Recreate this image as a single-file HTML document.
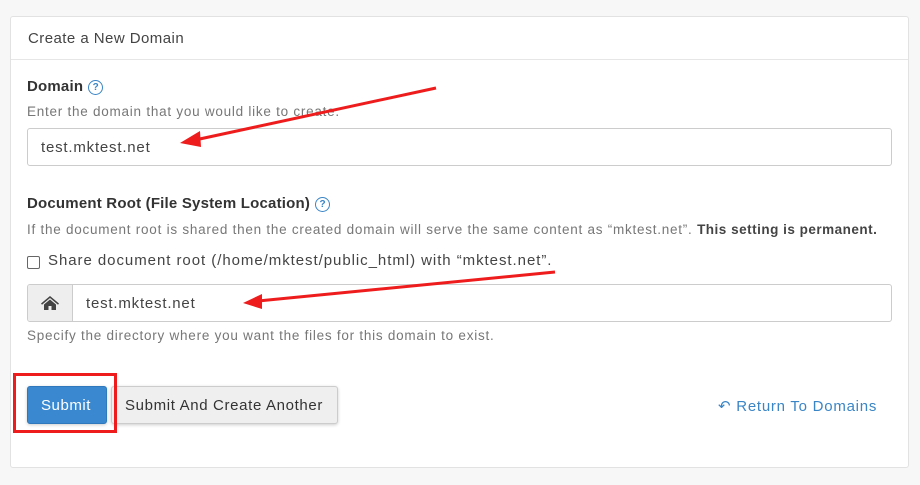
<!DOCTYPE html>
<html><head><style>
body{margin:0;width:920px;height:485px;background:#f7f7f7;font-family:"Liberation Sans",sans-serif;position:relative;overflow:hidden;color:#333;letter-spacing:.55px}
.p{position:absolute;left:10px;top:16px;width:897px;height:450px;background:#fff;border:1px solid #e2e2e2;border-radius:3px}
.h{position:absolute;left:0;top:0;right:0;height:42px;border-bottom:1px solid #e6e6e6}
.a{position:absolute;white-space:nowrap}
.q{display:inline-block;width:13px;height:13px;border:1.5px solid #3a85c6;border-radius:50%;color:#3a85c6;font-size:10px;text-align:center;line-height:13px;font-weight:bold;vertical-align:1px;margin-left:5px;letter-spacing:0}
.in{position:absolute;border:1px solid #ccc;border-radius:3px;background:#fff}
.lab{font-size:15px;font-weight:bold;color:#333;letter-spacing:.2px}
.hint{font-size:13.5px;color:#777;letter-spacing:.75px}
</style></head><body>
<div class="p">
<div class="h"><span class="a" style="left:17px;top:13px;font-size:15px;color:#444;letter-spacing:.45px">Create a New Domain</span></div>
</div>
<span class="a lab" style="left:27px;top:78px">Domain<span class="q">?</span></span>
<span class="a hint" style="left:27px;top:104px">Enter the domain that you would like to create.</span>
<div class="in" style="left:27px;top:128px;width:863px;height:36px"><span class="a" style="left:13px;top:10px;font-size:15px;color:#444;letter-spacing:.8px">test.mktest.net</span></div>
<span class="a lab" style="left:27px;top:195px">Document Root (File System Location)<span class="q">?</span></span>
<span class="a hint" style="left:27px;top:222px">If the document root is shared then the created domain will serve the same content as “mktest.net”. <b style="color:#444;letter-spacing:.5px">This setting is permanent.</b></span>
<div class="a" style="left:27px;top:256px;width:11px;height:11px;border:1px solid #666;border-radius:2px"></div>
<span class="a" style="left:48px;top:252px;font-size:15px;color:#444;letter-spacing:.95px">Share document root (/home/mktest/public_html) with “mktest.net”.</span>
<div class="in" style="left:27px;top:284px;width:863px;height:36px;overflow:hidden">
<div class="a" style="left:0;top:0;width:44px;height:36px;background:#eee;border-right:1px solid #ccc"></div>
<svg class="a" style="left:13px;top:11px" width="18" height="14" viewBox="0 0 18 14"><path d="M9 0L0 7.5l1 1.2L9 2l8 6.7 1-1.2z" fill="#444"/><path d="M3 8.5L9 3.5l6 5V14h-4.5v-4h-3v4H3z" fill="#444"/></svg>
<span class="a" style="left:58px;top:10px;font-size:15px;color:#444;letter-spacing:.8px">test.mktest.net</span></div>
<span class="a hint" style="left:27px;top:328px">Specify the directory where you want the files for this domain to exist.</span>
<div class="a" style="left:27px;top:386px;width:78px;height:36px;background:#3a89d0;border-radius:3px;border:1px solid #2f78bb;box-shadow:0 1px 3px rgba(0,0,0,.2)"><span class="a" style="left:13px;top:10px;color:#fff;font-size:15px">Submit</span></div>
<div class="a" style="left:111px;top:386px;width:225px;height:36px;background:#efefef;border:1px solid #ccc;border-radius:3px;box-shadow:0 1px 3px rgba(0,0,0,.2)"><span class="a" style="left:13px;top:10px;color:#333;font-size:15px;letter-spacing:.65px">Submit And Create Another</span></div>
<div class="a" style="left:13px;top:373px;width:104px;height:60px;border:3px solid #ee1c1c;box-sizing:border-box"></div>
<span class="a" style="left:718px;top:397px;color:#3a85c6;font-size:15px;letter-spacing:.75px">↶ Return To Domains</span>
<svg class="a" style="left:0;top:0" width="920" height="485">
<path d="M436 88L195 140" stroke="#ee1c1c" stroke-width="3"/>
<path d="M180 143L200 131L201 147z" fill="#ee1c1c"/>
<path d="M555 272L258 301" stroke="#ee1c1c" stroke-width="3"/>
<path d="M243 303L262 294L262 309z" fill="#ee1c1c"/>
</svg>
</body></html>
